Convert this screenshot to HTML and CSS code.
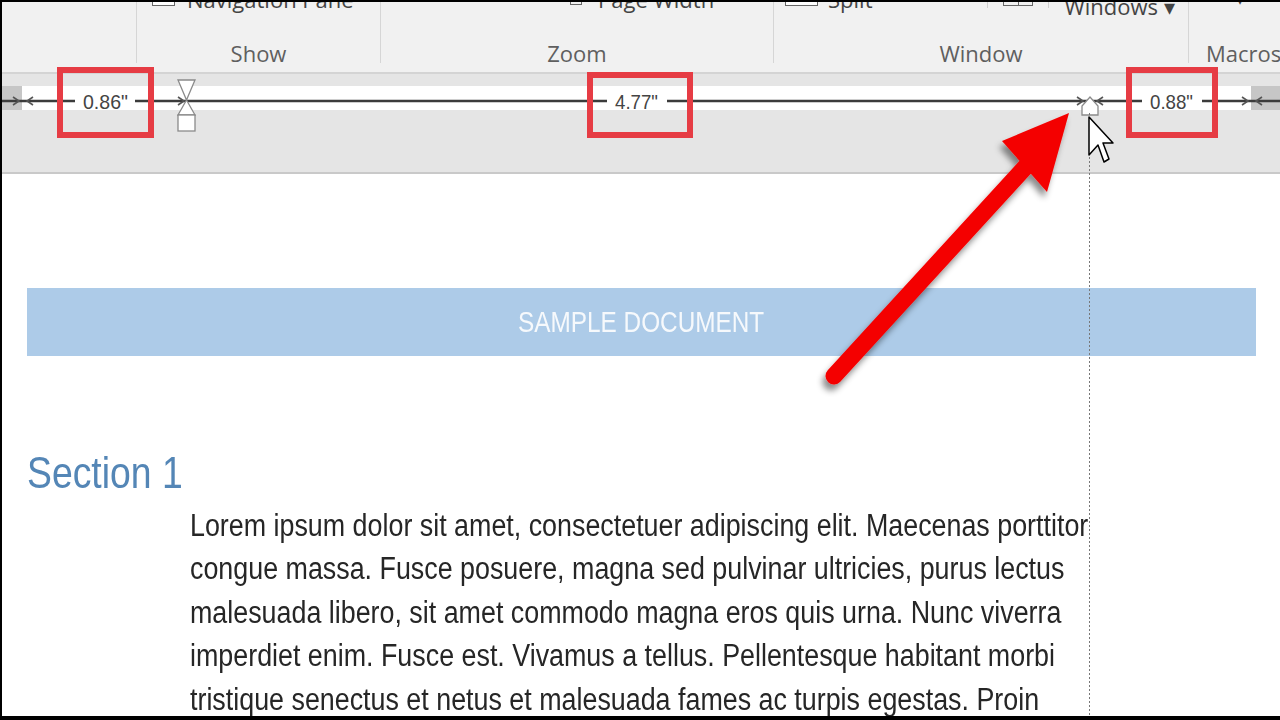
FILE: index.html
```html
<!DOCTYPE html>
<html lang="en">
<head>
    <meta charset="UTF-8">
    <title>Page margins on the ruler</title>
    <link rel="stylesheet" href="styles.css">
</head>
<body>

<div class="screen">
    <!-- Ribbon, cut off at the top -->
    <div class="ribbon">
        <div class="group"></div>
        <div class="group group-show">
            <div class="items"><span class="check"></span><span>Navigation Pane</span></div>
            <div class="label">Show</div>
        </div>
        <div class="group group-zoom">
            <div class="items"><span class="mini-icon"></span><span>Page Width</span></div>
            <div class="label">Zoom</div>
        </div>
        <div class="group group-window">
            <div class="items">
                <span class="check wide"></span><span>Split</span>
                <span class="vsep first-sep"></span>
                <span class="side-icon"></span>
                <span class="vsep"></span>
                <span class="switch-btn">Windows &#9662;</span>
            </div>
            <div class="label">Window</div>
        </div>
        <div class="group group-macros">
            <div class="items"><span class="caret">&#9662;</span></div>
            <div class="label">Macros</div>
        </div>
    </div>

    <!-- Horizontal ruler -->
    <div class="ruler-bar">
        <svg class="ruler" width="1278" height="98" viewBox="2 74 1278 98">
            <rect x="2" y="86" width="20" height="24" fill="#c6c6c6"/>
            <rect x="22" y="86" width="1229" height="24" fill="#fff"/>
            <rect x="1251" y="86" width="29" height="24" fill="#c6c6c6"/>

            <g stroke="#3b3b3b" stroke-width="2.5">
                <line x1="2" y1="101" x2="75" y2="101"/>
                <line x1="135" y1="101" x2="607" y2="101"/>
                <line x1="667" y1="101" x2="1142" y2="101"/>
                <line x1="1202" y1="101" x2="1280" y2="101"/>
            </g>

            <!-- indent markers -->
            <g fill="#fff" stroke="#8a8a8a" stroke-width="1.3">
                <polygon points="178,80 195,80 186.5,100"/>
                <polygon points="186.5,100 178,115 195,115"/>
                <rect x="178" y="115" width="17" height="16"/>
                <polygon points="1082,115 1082,106 1090,97 1098,106 1098,115"/>
            </g>

            <!-- dimension arrows -->
            <g fill="none" stroke="#555" stroke-width="1.6">
                <polyline points="13,97 19,101 13,105"/>
                <polyline points="33,97 27,101 33,105"/>
                <polyline points="178,97 184,101 178,105"/>
                <polyline points="1077,97 1083,101 1077,105"/>
                <polyline points="1103,97 1097,101 1103,105"/>
                <polyline points="1242,97 1248,101 1242,105"/>
                <polyline points="1262,97 1256,101 1262,105"/>
            </g>

            <g class="ruler-text">
                <text x="105.5" y="109" textLength="45" lengthAdjust="spacingAndGlyphs">0.86"</text>
                <text x="636.5" y="109" textLength="43" lengthAdjust="spacingAndGlyphs">4.77"</text>
                <text x="1171.5" y="109" textLength="43" lengthAdjust="spacingAndGlyphs">0.88"</text>
            </g>
        </svg>
    </div>

    <!-- Document page -->
    <div class="page">
        <div class="banner"><span class="banner-text">SAMPLE DOCUMENT</span></div>
        <h1 class="section-title">Section 1</h1>
        <p class="body-text">Lorem ipsum dolor sit amet, consectetuer adipiscing elit. Maecenas porttitor congue massa. Fusce posuere, magna sed pulvinar ultricies, purus lectus malesuada libero, sit amet commodo magna eros quis urna. Nunc viverra imperdiet enim. Fusce est. Vivamus a tellus. Pellentesque habitant morbi tristique senectus et netus et malesuada fames ac turpis egestas. Proin pharetra nonummy pede. Mauris et orci.</p>
    </div>

    <!-- Annotations drawn over the screenshot -->
    <svg class="marks" width="1278" height="714" viewBox="2 2 1278 714">
        <defs>
            <filter id="shadow" x="-20%" y="-20%" width="140%" height="140%">
                <feDropShadow dx="-3" dy="6" stdDeviation="3" flood-color="#000" flood-opacity="0.45"/>
            </filter>
        </defs>

        <line x1="1089.5" y1="113" x2="1089.5" y2="716" stroke="#777" stroke-dasharray="2 2"/>

        <g fill="none" stroke="#e63c44" stroke-width="6">
            <rect x="60" y="70" width="91" height="65"/>
            <rect x="590" y="75" width="100" height="60"/>
            <rect x="1129" y="70" width="86" height="65"/>
        </g>

        <g filter="url(#shadow)">
            <line x1="834" y1="376" x2="1030" y2="162" stroke="#f40000" stroke-width="17" stroke-linecap="round"/>
            <polygon points="1069,113 1002,141 1047,192" fill="#f40000"/>
        </g>

        <polygon points="1089,117 1089,155 1098,145 1104,162 1109,159 1103,143 1113,143"
                 fill="#fff" stroke="#000" stroke-width="1.5" stroke-linejoin="round"/>
    </svg>
</div>

</body>
</html>
```

FILE: styles.css
```css
/* black frame round the screenshot */
body {
    margin: 0;
    background: #000;
}

.screen {
    width: 1278px;
    height: 714px;
    margin: 2px 0 4px 2px;
    background: #fff;
    position: relative;
    overflow: hidden;
    font-family: "Open Sans", sans-serif;
}

/* Ribbon */
.ribbon {
    display: grid;
    grid-template-columns: 135px 244px 393px 415px 1fr;
    align-items: start;
    height: 70px;
    background: #f1f1f1;
    border-bottom: 2px solid #d4d4d4;
    overflow: hidden;
}

.group {
    height: 61px;
    display: flex;
    flex-direction: column;
    box-sizing: border-box;
    border-right: 1px solid #d6d6d6;
}

.group-macros {
    border-right: none;
}

.items {
    display: flex;
    align-items: flex-end;
    height: 24px;
    margin-top: -15px;
    font-size: 22px;
    line-height: 24px;
    color: #444;
    white-space: nowrap;
}

.group-show .items { padding-left: 15px; }
.group-zoom .items { padding-left: 189px; }
.group-window .items { padding-left: 11px; }
.group-macros .items { padding-left: 47px; }

.check {
    width: 23px;
    height: 16px;
    margin: 0 12px 5px 0;
    box-sizing: border-box;
    border: 1px solid #666;
    background: #fff;
}

.check.wide {
    width: 33px;
    margin-right: 10px;
}

.mini-icon {
    width: 12px;
    height: 10px;
    margin: 0 16px 6px 0;
    box-sizing: border-box;
    border: 1px solid #666;
}

.vsep {
    width: 1px;
    height: 20px;
    margin: 0 15px 3px 0;
    background: #cfcfcf;
}

.vsep.first-sep {
    margin-left: 115px;
}

.side-icon {
    width: 30px;
    height: 16px;
    margin: 0 15px 5px 0;
    box-sizing: border-box;
    border: 1px solid #666;
    background: linear-gradient(to right, transparent 14px, #666 14px, #666 15px, transparent 15px);
}

/* the big "Switch Windows" button sits lower than the small rows */
.switch-btn {
    margin-bottom: -7px;
}

.caret {
    font-size: 16px;
}

.label {
    margin-top: auto;
    font-size: 22px;
    line-height: 20px;
    color: #5f5f5f;
    text-align: center;
    white-space: nowrap;
}

.group-macros .label {
    text-align: left;
    padding-left: 17px;
}

/* Ruler */
.ruler-bar {
    height: 98px;
    background: #e5e5e5;
    border-bottom: 2px solid #c9c9c9;
}

.ruler {
    display: block;
}

.ruler-text text {
    font-family: "Liberation Sans", sans-serif;
    font-size: 21px;
    fill: #444;
    text-anchor: middle;
}

/* Document - the page font is a narrow one, so the sans is squeezed */
.page {
    padding: 114px 0 0 25px;
    font-family: "Liberation Sans", sans-serif;
}

.banner {
    width: 1229px;
    height: 68px;
    display: flex;
    align-items: center;
    justify-content: center;
    background: #adcbe8;
    color: #f6f9fc;
    font-size: 29.5px;
}

.banner-text {
    display: inline-block;
    transform: scaleX(0.825);
}

.section-title {
    margin: 90px 0 0;
    font-size: 45px;
    line-height: 54px;
    font-weight: normal;
    color: #5486b6;
    transform: scaleX(0.83);
    transform-origin: left top;
}

.body-text {
    width: 1058px;
    margin: 4px 0 0 163px;
    font-size: 31px;
    line-height: 43.4px;
    color: #262626;
    transform: scaleX(0.866);
    transform-origin: left top;
}

/* Red annotation layer */
.marks {
    position: absolute;
    top: 0;
    left: 0;
    pointer-events: none;
}
```
